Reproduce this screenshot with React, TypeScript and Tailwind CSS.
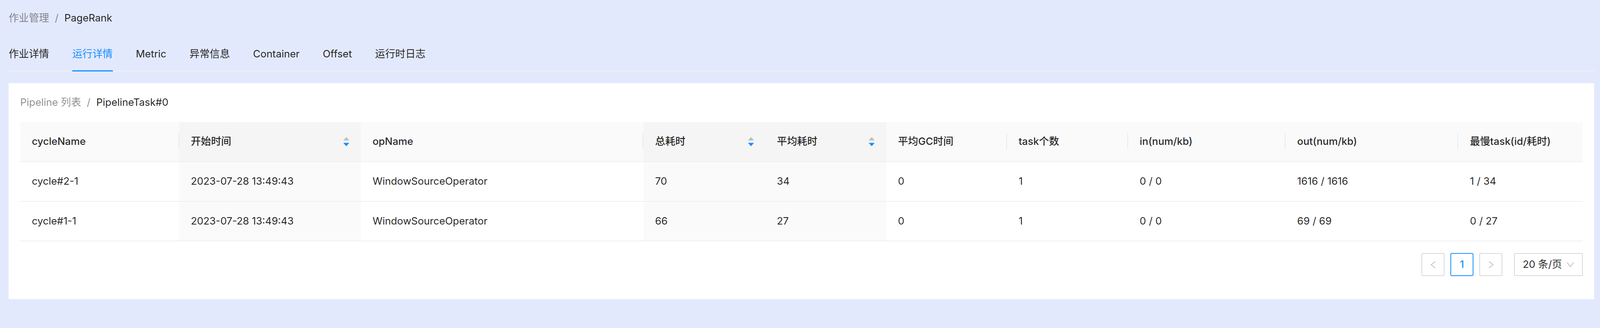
import React from "react";

type Col = { title: string; sort?: boolean; sep?: boolean };

const cols: Col[] = [
  { title: "cycleName", sep: true },
  { title: "开始时间", sort: true },
  { title: "opName", sep: true },
  { title: "总耗时", sort: true },
  { title: "平均耗时", sort: true },
  { title: "平均GC时间", sep: true },
  { title: "task个数", sep: true },
  { title: "in(num/kb)", sep: true },
  { title: "out(num/kb)", sep: true },
  { title: "最慢task(id/耗时)" },
];

const rows: string[][] = [
  ["cycle#2-1", "2023-07-28 13:49:43", "WindowSourceOperator", "70", "34", "0", "1", "0 / 0", "1616 / 1616", "1 / 34"],
  ["cycle#1-1", "2023-07-28 13:49:43", "WindowSourceOperator", "66", "27", "0", "1", "0 / 0", "69 / 69", "0 / 27"],
];

const GRID =
  "grid grid-cols-[407px_465.3px_723.4px_311.7px_309.9px_309px_309.9px_403.3px_442.2px_1fr]";

function Sorter() {
  return (
    <svg width="15" height="24" viewBox="0 0 16 26" className="shrink-0">
      <path d="M8 0.5 L15.5 9 L0.5 9 Z" fill="#bfbfbf" strokeLinejoin="round" stroke="#bfbfbf" strokeWidth="1" />
      <path d="M0.5 16.5 L15.5 16.5 L8 25 Z" fill="#1890ff" strokeLinejoin="round" stroke="#1890ff" strokeWidth="1" />
    </svg>
  );
}

function LeftIcon() {
  return (
    <svg width="22" height="22" viewBox="64 64 896 896" fill="#bfbfbf">
      <path d="M724 218.3V141c0-6.7-7.7-10.4-12.9-6.3L260.3 486.8a31.86 31.86 0 000 50.3l450.8 352.1c5.3 4.1 12.9.4 12.9-6.3v-77.3c0-4.9-2.3-9.6-6.1-12.6l-360-281 360-281.1c3.8-3 6.1-7.7 6.1-12.6z" />
    </svg>
  );
}

function RightIcon() {
  return (
    <svg width="22" height="22" viewBox="64 64 896 896" fill="#bfbfbf">
      <path d="M765.7 486.8L314.9 134.7A7.97 7.97 0 00302 141v77.3c0 4.9 2.3 9.6 6.1 12.6l360 281.1-360 281.1c-3.9 3-6.1 7.7-6.1 12.6V883c0 6.7 7.7 10.4 12.9 6.3l450.8-352.1a31.96 31.96 0 000-50.4z" />
    </svg>
  );
}

function DownIcon() {
  return (
    <svg width="22" height="22" viewBox="64 64 896 896" fill="#bfbfbf">
      <path d="M884 256h-75c-5.1 0-9.9 2.5-12.9 6.6L512 654.2 227.9 262.6c-3-4.1-7.8-6.6-12.9-6.6h-75c-6.5 0-10.3 7.4-6.5 12.7l352.6 486.1c12.8 17.6 39 17.6 51.7 0l352.6-486.1c3.9-5.3.1-12.7-6.4-12.7z" />
    </svg>
  );
}

const tabs = ["作业详情", "运行详情", "Metric", "异常信息", "Container", "Offset", "运行时日志"];

export default function App() {
  return (
    <div className="w-full min-h-screen bg-[#e3e9fd] pl-[22.2px] pr-[14.8px] pt-[25.9px] pb-[11px] flex flex-col text-[25.9px] text-black/85 [font-family:Inter,'Noto_Sans_CJK_SC',sans-serif] overflow-hidden">
      {/* top breadcrumb */}
      <div className="h-[40.7px] leading-[40.7px] flex items-center">
        <span className="text-black/45">作业管理</span>
        <span className="text-black/45 mx-[14.8px]">/</span>
        <span>PageRank</span>
      </div>

      {/* tabs */}
      <div className="mt-[29.6px] flex gap-[59.2px] border-b-2 border-[#f0f0f0]">
        {tabs.map((t, i) => (
          <div
            key={t}
            className={"relative py-[22.2px] leading-[40.7px] " + (i === 1 ? "text-[#1890ff]" : "")}
          >
            {t}
            {i === 1 && <span className="absolute left-0 right-0 bottom-[-2px] h-[3.7px] bg-[#1890ff]" />}
          </div>
        ))}
      </div>

      {/* card */}
      <div className="mt-[29.6px] bg-white p-[29.6px] flex flex-col">
        <div className="h-[40.7px] leading-[40.7px] flex items-center">
          <span className="text-black/45">Pipeline 列表</span>
          <span className="text-black/45 mx-[14.8px]">/</span>
          <span>PipelineTask#0</span>
        </div>

        <div className="mt-[29.6px] flex flex-col">
          <div className={GRID + " border-b-2 border-[#f0f0f0]"}>
            {cols.map((c) => (
              <div
                key={c.title}
                className={
                  "relative h-[99.9px] px-[29.6px] flex items-center justify-between font-medium " +
                  (c.sort ? "bg-[#f5f5f5] " : "bg-[#fafafa] ") +
                  (c.sep
                    ? "before:content-[''] before:absolute before:right-0 before:top-[29.6px] before:h-[40.7px] before:w-[2px] before:bg-black/[0.06]"
                    : "")
                }
              >
                <span className="leading-[40.7px] whitespace-nowrap">{c.title}</span>
                {c.sort && <Sorter />}
              </div>
            ))}
          </div>
          {rows.map((r, ri) => (
            <div key={ri} className={GRID + " border-b-2 border-[#f0f0f0]"}>
              {r.map((v, ci) => (
                <div
                  key={ci}
                  className={
                    "h-[99.9px] px-[29.6px] flex items-center leading-[40.7px] whitespace-nowrap " +
                    (cols[ci].sort ? "bg-[#fafafa]" : "bg-white")
                  }
                >
                  {v}
                </div>
              ))}
            </div>
          ))}
        </div>

        {/* pagination */}
        <div className="mt-[29.6px] mb-[29.6px] flex justify-end items-center">
          <div className="w-[59.2px] h-[59.2px] border-2 border-[#d9d9d9] rounded-[4px] flex items-center justify-center">
            <LeftIcon />
          </div>
          <div className="ml-[14.8px] w-[59.2px] h-[59.2px] border-2 border-[#1890ff] rounded-[4px] flex items-center justify-center text-[#1890ff] font-medium">
            1
          </div>
          <div className="ml-[14.8px] w-[59.2px] h-[59.2px] border-2 border-[#d9d9d9] rounded-[4px] flex items-center justify-center">
            <RightIcon />
          </div>
          <div className="ml-[29.6px] w-[175.8px] h-[59.2px] border-2 border-[#d9d9d9] rounded-[4px] flex items-center justify-between pl-[20.4px] pr-[18.5px]">
            <span className="whitespace-nowrap">20 条/页</span>
            <DownIcon />
          </div>
        </div>
      </div>
    </div>
  );
}
